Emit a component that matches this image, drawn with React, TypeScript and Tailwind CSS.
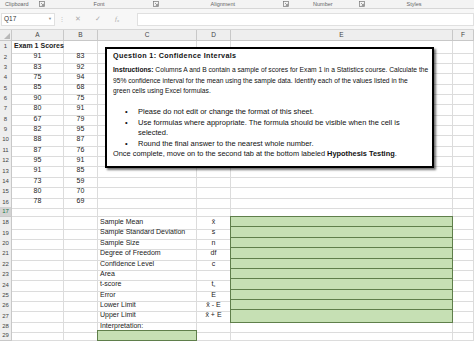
import React from 'react'

const COLS = 'grid grid-cols-[12px_52px_34px_99px_34px_222px_1fr]'

const scoresA = [91, 83, 75, 85, 90, 80, 67, 82, 88, 87, 95, 91, 73, 80, 78]
const scoresB = [83, 92, 94, 68, 75, 91, 79, 95, 87, 76, 91, 85, 59, 70, 69]

const stats: Record<number, [string, React.ReactNode]> = {
  18: ['Sample Mean', 'x\u0304'],
  19: ['Sample Standard Deviation', 's'],
  20: ['Sample Size', 'n'],
  21: ['Degree of Freedom', 'df'],
  22: ['Confidence Level', 'c'],
  23: ['Area', ''],
  24: ['t-score', <span>t<sub className="text-[4px]">c</sub></span>],
  25: ['Error', 'E'],
  26: ['Lower Limit', 'x\u0304 - E'],
  27: ['Upper Limit', 'x\u0304 + E'],
  28: ['Interpretation:', ''],
}

function Launcher() {
  return (
    <svg width="6" height="6" viewBox="0 0 6 6" className="text-[#777]">
      <rect x="0.5" y="0.5" width="5" height="5" fill="none" stroke="currentColor" strokeWidth="0.7" />
      <path d="M2 2l2.5 2.5M4.5 2.8v1.7H2.8" stroke="currentColor" strokeWidth="0.7" fill="none" />
    </svg>
  )
}

function Cell({ children, className = '' }: { children?: React.ReactNode; className?: string }) {
  return (
    <div className={`flex h-full items-end overflow-visible whitespace-nowrap border-b border-r border-[#dcdcdc] pb-[1px] ${className}`}>
      {children}
    </div>
  )
}

// green input cell: each one draws its own top line so the next row's fill can't hide it
function GreenCell({ last }: { last?: boolean }) {
  return (
    <div className="relative h-full">
      <div
        className={`absolute -left-[1px] -top-[1px] right-0 bottom-0 border-x border-t border-[#5f7f4b] bg-[#c6e0b4] ${
          last ? 'border-b' : ''
        }`}
      />
    </div>
  )
}

function Row({ n }: { n: number }) {
  const stat = stats[n]
  const green = n >= 18 && n <= 27
  return (
    <div className={`${COLS} h-[10.36px]`}>
      <div
        className={`flex items-center justify-center border-b border-r border-[#c8c8c8] text-[6px] ${
          n === 17 ? 'bg-[#d3d3d3] text-[#217346]' : 'bg-[#eeeeee] text-[#444]'
        }`}
      >
        {n}
      </div>
      <Cell className={n === 1 ? 'pl-[2px] font-bold' : 'justify-center'}>
        {n === 1 ? 'Exam 1 Scores' : n >= 2 && n <= 16 ? scoresA[n - 2] : ''}
      </Cell>
      <Cell className="justify-center">{n >= 2 && n <= 16 ? scoresB[n - 2] : ''}</Cell>
      {n === 29 ? <GreenCell last /> : <Cell className="pl-[2px]">{stat ? stat[0] : ''}</Cell>}
      <Cell className="justify-center">{stat ? stat[1] : ''}</Cell>
      {green ? <GreenCell last={n === 27} /> : <Cell />}
      <Cell />
    </div>
  )
}

export default function App() {
  const rows = Array.from({ length: 29 }, (_, i) => i + 1)

  return (
    <div className="relative h-[342px] w-[474px] overflow-hidden bg-white text-[7px] text-[#222] [font-family:'Liberation_Sans',Arial,sans-serif]">
      {/* ribbon group labels */}
      <div className="flex h-[9px] items-center border-b border-[#d6d6d6] bg-[#f3f3f3] text-[5.5px] text-[#666]">
        <span className="ml-[5px]">Clipboard</span>
        <span className="ml-[10px]"><Launcher /></span>
        <span className="ml-[49px]">Font</span>
        <span className="ml-[48px]"><Launcher /></span>
        <span className="ml-[52px]">Alignment</span>
        <span className="ml-[48px]"><Launcher /></span>
        <span className="ml-[24px]">Number</span>
        <span className="ml-[26px]"><Launcher /></span>
        <span className="ml-[42px]">Styles</span>
      </div>

      {/* formula bar */}
      <div className="flex h-[21px] items-center border-b border-[#d6d6d6] bg-[#f7f7f7]">
        <div className="ml-[1px] flex h-[13px] w-[54px] items-center justify-between border border-[#e0e0e0] bg-white px-[2px] text-[6.5px] text-[#333]">
          <span>Q17</span>
          <span className="text-[4px] text-[#888]">▼</span>
        </div>
        <span className="ml-[4px] text-[6px] text-[#bbb]">⋮</span>
        <div className="ml-[10px] flex w-[62px] items-center gap-[14px] text-[7px] text-[#aaa]">
          <span>✕</span>
          <span>✓</span>
          <span className="italic [font-family:'Liberation_Serif',serif]">
            f<sub className="text-[5px]">x</sub>
          </span>
        </div>
        <div className="h-[13px] flex-1 border border-[#e0e0e0] bg-white" />
      </div>

      {/* column headers */}
      <div className={`${COLS} h-[11px] bg-[#eeeeee] text-[6.5px] text-[#444]`}>
        <div className="relative border-b border-r border-[#c8c8c8]">
          <svg width="6" height="6" className="absolute bottom-[1px] right-[1px]" viewBox="0 0 6 6">
            <path d="M6 0V6H0z" fill="#b8b8b8" />
          </svg>
        </div>
        {['A', 'B', 'C', 'D', 'E', 'F'].map((c) => (
          <div key={c} className="flex items-center justify-center border-b border-r border-[#c8c8c8]">
            {c}
          </div>
        ))}
      </div>

      {rows.map((n) => (
        <Row key={n} n={n} />
      ))}

      {/* instructions text box */}
      <div className="absolute left-[105px] top-[47px] h-[121px] w-[329px] border-2 border-black bg-white px-[6px] pt-[2px] leading-[10.5px] text-[#111] shadow-[2px_2px_2px_rgba(0,0,0,0.55)]">
        <div className="whitespace-nowrap text-[7.2px] font-bold tracking-[0.35px]">Question 1: Confidence Intervals</div>
        <div className="mt-[3.5px] whitespace-nowrap text-[6.7px]">
          <span className="font-bold">Instructions:</span> Columns A and B contain a sample of scores for Exam 1 in a
          Statistics course. Calculate the
          <br />
          95% confidence interval for the mean using the sample data. Identify each of the values listed in the
          <br />
          green cells using Excel formulas.
        </div>
        <ul className="mt-[10.5px] whitespace-nowrap text-[7.5px]">
          {[
            <>Please do not edit or change the format of this sheet.</>,
            <>
              Use formulas where appropriate. The formula should be visible when the cell is
              <br />
              selected.
            </>,
            <>Round the final answer to the nearest whole number.</>,
          ].map((t, i) => (
            <li key={i} className="flex">
              <span className="ml-[12px] w-[13px]">•</span>
              <span>{t}</span>
            </li>
          ))}
        </ul>
        <div className="whitespace-nowrap text-[7.4px]">
          Once complete, move on to the second tab at the bottom labeled{' '}
          <span className="font-bold">Hypothesis Testing</span>.
        </div>
      </div>
    </div>
  )
}
